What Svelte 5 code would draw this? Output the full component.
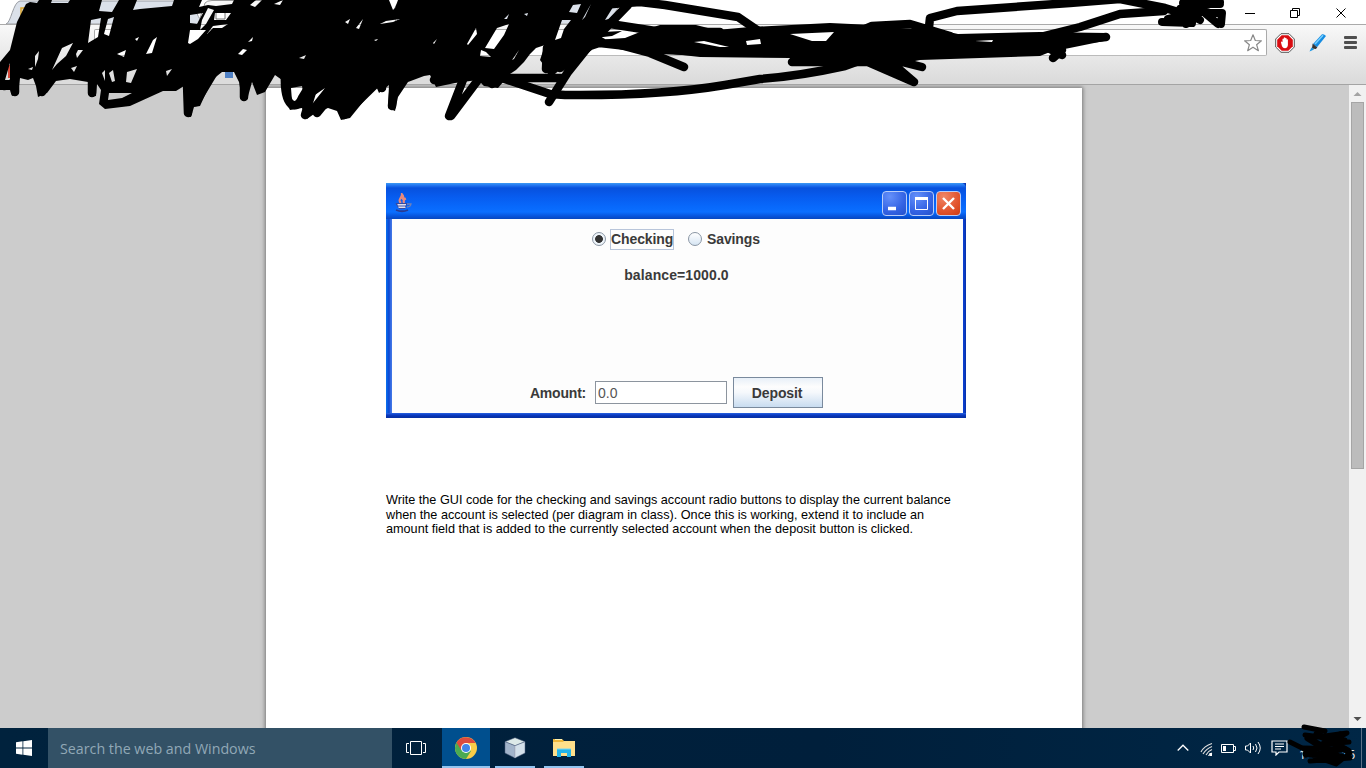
<script>
  let account = $state("checking");
  let balances = $state({ checking: "1000.0", savings: "500.0" });
  let amount = $state("0.0");

  function deposit() {
    const total = Number(balances[account]) + Number(amount);
    balances[account] = total.toFixed(1);
  }

  // marker strokes, each is a freehand line over the toolbar
  const strokes = [
    "M4 86L12 85L20 66M15 60L15 92M42 78L42 92M92 82L92 93",
    "M187 84L188 113M244 84L244 97M188 72L196 102L214 72",
    "M285 74Q284 98 291 104Q298 108 302 98L318 72M305 115L312 92L330 70M317 113L352 70M332 98L345 76",
    "M344 115L390 70M382 78L382 88M392 106L394 84L411 60M392 80L418 67",
    "M434 80L455 76M449 116L466 72M451 116L484 72M484 75L492 84",
    "M490 74L550 94L565 95Q660 96 725 85L760 79Q800 76 845 66L870 57",
    "M549 102L568 72L592 42L628 5M547 48L546 69M500 78L564 78M553 70L586 42",
    "M600 5L640 2L665 5L738 17L760 32M610 24L662 32L720 32M620 45L650 53L684 67",
    "M560 68L590 46L602 42M600 43L662 50L720 52",
    "M792 62L870 62L912 55M860 58L890 70L912 80M868 62L914 82L886 58L922 67",
    "M842 39L872 26L910 24L950 36M929 27L930 18L957 11L1070 3L1120 -1L1165 8L1188 15",
    "M1020 46L1106 37M1020 42L1080 27L1120 14L1164 11M1050 49L1062 55M1053 58L1062 50"
  ];

  const heavy = [
    "M1183 3L1220 4M1190 8L1220 2M1188 15L1206 11M1162 22L1192 23M1168 19L1190 14M1206 13L1222 13L1221 24M1180 9L1200 20M1206 14L1218 24M1183 10L1186 24"
  ];
</script>

<div class="screen">
  <header class="browser">
    <div class="tabstrip">
      <svg class="tabs" width="640" height="24" viewBox="0 0 640 24">
        <path d="M6 24C11 23 13 2 20 1H188C195 2 198 23 205 24Z" fill="#dbe1ea" stroke="#9a9da3" />
        <path d="M198 24L205 3Q207 .5 212 .5H383Q389 1 397 24" fill="#f7f7f7" stroke="#999" />
        <path d="M394 10C397 2 400 1 405 1H608Q615 2 622 0L609 24H399Z" fill="#dbe1ea" stroke="#aaa" />
        <rect x="21" y="8" width="7" height="10" fill="#ded4b1" stroke="#dda52b" stroke-width="1.5" />
        <path d="M216 12h9v7h-9z" fill="#fff" stroke="#777" />
        <circle cx="407" cy="8" r="3" fill="#e68b27" />
      </svg>
      <svg class="caption" width="138" height="24" viewBox="0 0 138 24" fill="none" stroke="#000">
        <path d="M17 13.5h10" />
        <path d="M62.500 10.500h7v7h-7zM64.500 10V8.500h7v7h-2" />
        <path d="M108.500 8.500l9 9M117.500 8.500l-9 9" />
      </svg>
    </div>

    <div class="toolbar">
      <div class="address">
        <svg width="20" height="20" viewBox="0 0 20 20">
          <path d="M10 1.800l2.300 5.700 6.100.3-4.800 3.900 1.800 6-5.400-3.500-5.300 3.500 1.700-6-4.800-3.900 6.100-.3z" fill="#fff" stroke="#888" stroke-width="1.200" stroke-linejoin="round" />
        </svg>
      </div>
      <svg class="ext" width="20" height="20" viewBox="0 0 20 20">
        <path d="M6 .7h8L19.300 6v8L14 19.300H6L.7 14V6z" fill="#fff" stroke="#555" />
        <path d="M6.700 2.200h6.600l4.500 4.500v6.600l-4.500 4.500H6.700l-4.500-4.500V6.700z" fill="#d90d12" />
        <path d="M6 9.500q0-1 .8-1l.7.8V6q.7-1 1.300 0v2-3.200q.7-1 1.400 0V8 5.200q.7-.9 1.400 0V9 6.600q.8-.7 1.300 0V12q-.2 3-3 3.200-2 0-2.900-2z" fill="#fff" />
      </svg>
      <svg class="ext pen" width="18" height="20" viewBox="0 0 18 20">
        <path d="M4 11L13 1.300q2-.7 4 1.600L8 14.200z" fill="#168ce1" />
        <path d="M6 11l8-8.700" stroke="#78d0ff" stroke-width="1.500" />
        <path d="M3.600 10.600l4.700 4-1.500 1.500-3.800-.6z" fill="#333" />
        <path d="M2.500 14.500l2.500 2-4.500 2z" fill="#1595e5" />
      </svg>
      <div class="menu"><i></i><i></i><i></i></div>
    </div>

    <div class="bookmarks">
      <i class="red"></i><i class="green"></i><i class="blue"></i>
    </div>
  </header>

  <main class="viewer">
    <article class="page">
      <section class="window">
        <div class="titlebar">
          <svg width="18" height="20" viewBox="0 0 18 20" fill="none">
            <path d="M7 10C3 7 8 5 8 1.500q2.500 3 0 5 2.500-2 3-.5-2 1-1 4" stroke="#e98a7c" stroke-width="2.200" />
            <path d="M2 10.500h11l-2 5H5z" fill="#8f9bd0" stroke="#3149a3" />
            <path d="M13 11h4q-.5 3-4 3" stroke="#6f80b8" stroke-width="1.300" />
            <path d="M4 11.500h8M4.500 14.500h7" stroke="#dde0ee" />
            <path d="M2 17q6 2.500 12 0" stroke="#2a3b92" stroke-width="1.800" />
          </svg>
          <div class="controls">
            <button aria-label="Minimize"><svg width="23" height="23"><path d="M5 16.500h8" stroke="#fff" stroke-width="3.500" /></svg></button>
            <button aria-label="Maximize"><svg width="23" height="23"><path d="M5.500 6.500h12v11h-12z" fill="none" stroke="#fff" /><path d="M5 6.500h13" stroke="#fff" stroke-width="3" /></svg></button>
            <button class="close" aria-label="Close"><svg width="23" height="23"><path d="M6 6l11 11M17 6L6 17" stroke="#fff" stroke-width="2.400" /></svg></button>
          </div>
        </div>

        <div class="pane">
          <div class="accounts">
            <label>
              <input type="radio" value="checking" bind:group={account} />
              <span class="boxed">Checking</span>
            </label>
            <label>
              <input type="radio" value="savings" bind:group={account} />
              <span>Savings</span>
            </label>
          </div>
          <div class="balance">balance={balances[account]}</div>
          <div class="entry">
            <label for="amount">Amount:</label>
            <input id="amount" bind:value={amount} />
            <button onclick={deposit}>Deposit</button>
          </div>
        </div>
      </section>

      <p>
        Write the GUI code for the checking and savings account radio buttons to display the current balance<br />
        when the account is selected (per diagram in class). Once this is working, extend it to include an<br />
        amount field that is added to the currently selected account when the deposit button is clicked.
      </p>
    </article>

    <div class="scrollbar">
      <svg width="17" height="17"><path d="M4.500 11h8l-4-4z" fill="#a3a3a3" /></svg>
      <div class="thumb"></div>
      <svg width="17" height="17"><path d="M4.500 6h8l-4 4z" fill="#505050" /></svg>
    </div>
  </main>

  <footer class="taskbar">
    <div class="start">
      <svg width="16" height="16" viewBox="0 0 16 16" fill="#fff"><path d="M0 2.200l6.500-.9v6.200H0zM7.300 1.200L16 0v7.500H7.300zM0 8.400h6.500v6.300L0 13.800zM7.300 8.400H16V16l-8.700-1.200z" /></svg>
    </div>
    <div class="search">Search the web and Windows</div>
    <div class="task view">
      <svg width="20" height="16" viewBox="0 0 20 16" fill="none" stroke="#fff"><path d="M4.500 1.500h11v13h-11zM3 3.500H.5v9H3M17 3.500h2.500v9H17" /></svg>
    </div>
    <div class="task active">
      <svg width="22" height="22" viewBox="0 0 22 22">
        <circle cx="11" cy="11" r="11" fill="#f8cd48" />
        <path d="M11 11L1.500 5.500A11 11 0 0 0 11 22l5-8z" fill="#4baa52" />
        <path d="M1.500 5.500A11 11 0 0 1 20.600 6H11L6 13z" fill="#dc4b3e" />
        <circle cx="11" cy="11" r="5" fill="#fff" />
        <circle cx="11" cy="11" r="4" fill="#4285e8" />
      </svg>
    </div>
    <div class="task open">
      <svg width="22" height="22" viewBox="0 0 22 22" stroke="#506080" stroke-width=".5">
        <path d="M11 .7l10 4-10 4-10-4z" fill="#dce9e8" />
        <path d="M1 4.700l10 4V21L1 16z" fill="#a2b4ca" />
        <path d="M21 4.700l-10 4V21l10-5z" fill="#d3e0ea" />
        <path d="M11 8.700V21" stroke="#fff" />
      </svg>
    </div>
    <div class="task open folder">
      <svg width="22" height="20" viewBox="0 0 22 20">
        <path d="M0 1h9l2 2h10v4H0z" fill="#efb83c" />
        <path d="M2 1.500h7" stroke="#fff3b3" />
        <path d="M0 4h10l1-1h11v15H0z" fill="#ffe08b" />
        <path d="M4 19v-8h14v8h-4v-4H8v4z" fill="#23b4e9" />
        <path d="M4 11h14" stroke="#79d7f5" />
      </svg>
    </div>

    <div class="tray">
      <svg width="12" height="12" viewBox="0 0 12 12" fill="none" stroke="#fff" stroke-width="1.300"><path d="M.7 8.500L6 3.200l5.300 5.300" /></svg>
      <svg class="wifi" width="14" height="14" viewBox="0 0 14 14" fill="none" stroke="#ddd" stroke-width="1.200"><path d="M1 10Q4 4 12 1.500M3 12Q6 7 12 4.500M6 13q2-4 6-5.500M8.500 14q1-2 3.500-3" /><path d="M9.500 11H12v3H9.500z" fill="#fff" stroke="none" /></svg>
      <svg width="15" height="12" viewBox="0 0 15 12" fill="none" stroke="#fff"><path d="M.5 2.500h12v8H.5zM13 4.500h1.500v4H13" /><path d="M2 4h3v5H2z" fill="#fff" stroke="none" /></svg>
      <svg width="17" height="14" viewBox="0 0 17 14" fill="none" stroke="#fff"><path d="M.5 5h2l3-3v10l-3-3h-2zM8 5q1.500 2 0 4M10.500 3q3 4 0 8M13 1q4.500 6 0 12" /></svg>
      <svg width="17" height="16" viewBox="0 0 17 16" fill="none" stroke="#fff" stroke-width="1.200"><path d="M1 1h15v11H8l-3 3v-3H1zM4 4h9M4 6.500h9M4 9h6" /></svg>
      <span class="clock">1<span>16</span></span>
      <i class="peek"></i>
    </div>
  </footer>

  <svg class="marker" width="1366" height="768" viewBox="0 0 1366 768" fill="none" stroke="#000" stroke-linecap="round" stroke-linejoin="round">
    <!-- scribbled out block, even-odd leaves the slivers between strokes open -->
    <path
      stroke="none"
      fill="#000"
      fill-rule="evenodd"
      d="M26 4L30 2L37 3L39 0H52L51 3L68 3L70 0H102L99 11L112 12L119 0H137L133 10L140 9L172 6L174 0H202L199 7L208 5L216 6L232 4L234 0H638L628 9L612 20L598 37L585 46L575 52L563 63L554 74L548 75L546 68L540 60L545 45L536 48L530 54L524 62L516 70L510 74L498 88L484 86L478 80L455 83L436 87L430 75L424 76L408 82L398 97L395 111L388 108L389 85L379 93L376 86L350 118L341 120L337 111L328 108L314 114L307 119L302 108L290 110L284 98L282 80L275 75L265 92L257 95L252 82L247 100L242 99L239 82L234 72L222 72L212 80L200 106L194 107L191 117L185 116L184 86L176 91L163 91L130 106L105 109L99 104L101 90L97 84L96 96L90 97L88 82L70 79L56 81L47 93L38 97L36 86L33 78L28 80L20 78L18 94L12 96L10 90L0 90L0 62L10 50L17 22Z
      M5 80L10 63L10 80ZM91 20L101 18L98 37L88 43ZM108 19L114 17L109 36L104 34ZM62 48L73 43L66 56L57 64L52 70ZM35 56L39 51L38 59L35 67ZM78 50L83 50L77 58L76 54Z
      M117 54L126 50L124 57ZM153 40L157 37L152 53L146 54ZM135 39L139 37L137 41ZM188 43L190 30L206 30L198 39L190 44ZM207 34L213 26L228 24L222 28L213 28ZM215 13L231 13L226 20L214 20ZM202 20L208 8L214 10L206 24L200 30ZM190 15L203 13L197 24L190 23ZM250 5L256 0H262L255 7ZM274 4L283 0L280 5Z
      M238 54L243 49L247 50L242 55ZM248 42L253 37L252 41ZM299 58L306 55L304 59ZM102 73L105 70L105 81ZM109 73L113 70L115 81L112 82ZM127 72L137 69L131 83L126 82ZM71 68L77 66L74 72ZM28 69L33 67L32 70ZM166 71L172 69L167 76ZM108 100L109 93L132 93L122 98ZM192 83L195 85L193 93Z
      M291 88L302 86L303 92L299 103L292 101ZM309 108L312 97L325 88ZM329 97L336 86L332 102ZM345 22L350 19L348 24ZM356 28L363 19L359 29ZM380 24L386 21L400 19L393 22ZM374 40L378 39L376 41ZM433 43L437 39L434 44Z
      M467 44L476 28L477 34L468 45ZM485 48L497 28L509 24L504 35L494 49ZM481 50L486 52L491 57L480 56ZM512 60L519 50L514 59ZM504 19L509 14L507 19ZM524 14L528 13L527 16ZM555 40L562 20L571 20L564 29L561 38ZM569 12L573 5L581 4L577 13ZM582 20L591 4L585 17ZM605 20L615 4L621 8L612 18ZM594 37L603 32L622 31L612 36L594 38ZM393 10L389 0H398L395 8Z"
    />
    {#each strokes as d}
      <path {d} stroke-width="8.500" />
    {/each}
    <!-- crossed out web address -->
    <path
      stroke="none"
      fill="#000"
      fill-rule="evenodd"
      d="M595 40L625 38L650 28L660 25L696 25L716 30L750 27L830 23L872 25L880 27L940 30L958 34L1040 32L1106 33L1104 41L1050 52L1040 56L920 60L910 62L792 66L790 58L700 57L655 52L620 48Z
      M694 42L704 41L729 47L720 47ZM746 41L760 39L761 44L747 45ZM790 34L834 32L826 41L812 41ZM975 41L993 40L992 42Z"
    />
    {#each heavy as d}
      <path {d} stroke-width="8" />
    {/each}
    <path d="M1304 727L1325 731M1290 742L1308 751M1305 735L1345 740M1310 738L1347 733L1326 744L1349 742M1303 748L1346 749L1310 755L1342 756M1310 761L1350 758M1311 755L1336 764L1350 753" stroke-width="5" />
    <path d="M1308 738L1340 758M1317 734L1348 751M1306 754L1340 735" stroke-width="7" />
  </svg>
</div>

<style>
  :global(body) {
    margin: 0;
    overflow: hidden;
  }

  .screen {
    position: relative;
    width: 1366px;
    height: 768px;
    display: flex;
    flex-direction: column;
    font-family: "Liberation Sans", Arial, sans-serif;
    background: #ccc;
  }

  svg {
    display: block;
    flex: none;
  }

  .browser {
    height: 85px;
    box-sizing: border-box;
    border-bottom: 1px solid #a4a4a4;
    background: linear-gradient(#f8f8f8 25px, #dcdcdc 80px);
    flex: none;
  }

  .tabstrip {
    display: flex;
    justify-content: space-between;
    height: 24px;
    background: #fff;
    border-bottom: 1px solid #aaa;
  }

  .toolbar {
    display: flex;
    align-items: center;
    height: 33px;
    padding: 1px 9px 0 94px;
  }

  .address {
    width: 1173px;
    height: 27px;
    box-sizing: border-box;
    border: 1px solid #aaa;
    border-bottom-color: #bbb;
    border-radius: 2px;
    background: #fff;
    display: flex;
    align-items: center;
    justify-content: flex-end;
    padding-right: 3px;
  }

  .ext {
    margin-left: 8px;
  }

  .pen {
    margin-left: 14px;
  }

  .menu {
    margin: -1px 0 0 17px;
    display: grid;
    gap: 2px;
  }

  .menu i {
    width: 13px;
    height: 3px;
    border-radius: 1px;
    background: #4f4f4f;
  }

  .bookmarks {
    display: flex;
    padding: 6px 8px;
  }

  .bookmarks i {
    width: 2px;
    height: 13px;
  }

  .red {
    background: #d84a3a;
  }

  .green {
    background: #24a15d;
  }

  .bookmarks .blue {
    width: 8px;
    margin-left: 213px;
    background: #4f80c4;
  }

  .viewer {
    height: 643px;
    display: flex;
    justify-content: space-between;
    overflow: hidden;
  }

  .page {
    width: 696px;
    height: 640px;
    margin: 3px 0 0 266px;
    padding: 95px 0 0 120px;
    box-sizing: content-box;
    background: #fff;
    box-shadow: 0 0 4px 1px #777;
  }

  .window {
    width: 580px;
    height: 235px;
    box-sizing: border-box;
    display: flex;
    flex-direction: column;
    padding: 0 3px 4px 6px;
    background:
      linear-gradient(#2a63e0, #0a3bc4 2px, #0730a5) bottom / 100% 4px no-repeat,
      linear-gradient(90deg, #0a72f0 0, #0c45d1 3px, #3f74e5 5px, #0b42cf 570px, #0b3fcf 578px, #0830a4 580px);
    border-bottom: 1px solid #0730a5;
  }

  .titlebar {
    display: flex;
    align-items: center;
    justify-content: space-between;
    height: 36px;
    margin: 0 -3px 0 -6px;
    padding: 4px 5px 0 8px;
    box-sizing: border-box;
    border-radius: 0 5px 0 0;
    background: linear-gradient(#3c9af2 0, #267af3 2px, #0751dd 5px, #075bee 13px, #0869fc 24px, #0b6fff 29px, #0755dd 33px, #0747bf 36px);
  }

  .controls {
    display: flex;
    gap: 2px;
  }

  .controls button {
    width: 25px;
    height: 25px;
    padding: 0;
    border: 1px solid #b8cdf8;
    border-radius: 4px;
    background: radial-gradient(circle at 30% 20%, #6490fa, #3463e4 60%, #2351cb);
  }

  .controls .close {
    background: radial-gradient(circle at 30% 20%, #f08665, #e2542e 60%, #ce3b13);
  }

  .pane {
    flex: 1;
    display: flex;
    flex-direction: column;
    align-items: center;
    padding-right: 2px;
    background: #fdfdfd;
    color: #3a3a3a;
    font-size: 14px;
    font-weight: bold;
  }

  .accounts {
    display: flex;
    gap: 14px;
    margin-top: 10px;
  }

  .accounts label {
    display: flex;
    align-items: center;
    gap: 3px;
    height: 21px;
  }

  .accounts input {
    appearance: none;
    width: 14px;
    height: 14px;
    box-sizing: border-box;
    margin: 0 1px 1px 0;
    border: 1px solid #8a96a4;
    border-radius: 50%;
    background: linear-gradient(#fff, #d6e5f3);
  }

  .accounts input:checked {
    background: radial-gradient(circle, #333 0 3.500px, #eef4f9 4.300px);
  }

  .accounts span {
    line-height: 19px;
    letter-spacing: -0.130px;
    border: 1px solid transparent;
  }

  .accounts .boxed {
    border-color: #b8c5da;
  }

  .balance {
    margin-top: 17px;
    line-height: 16px;
    letter-spacing: 0.1px;
  }

  .entry {
    display: flex;
    align-items: center;
    margin-top: 94px;
  }

  .entry label {
    letter-spacing: -0.2px;
  }

  .entry input {
    width: 132px;
    height: 23px;
    box-sizing: border-box;
    margin: 0 6px 0 9px;
    padding: 0 2px;
    border: 1px solid #8c949e;
    background: #fff;
    color: #555;
    font: 14px "Liberation Sans", Arial, sans-serif;
  }

  .entry button {
    width: 90px;
    height: 31px;
    padding: 0 2px 0 0;
    border: 1px solid #7a8a9d;
    background: linear-gradient(#e8f0f8, #fdfdfd 30%, #f5f8fc 50%, #c8dcf0);
    color: #3a3a3a;
    font: bold 14px "Liberation Sans", Arial, sans-serif;
    letter-spacing: -0.1px;
  }

  p {
    margin: 75px 0 0;
    font-size: 12.670px;
    line-height: 14.500px;
    white-space: nowrap;
    color: #000;
  }

  .scrollbar {
    width: 17px;
    display: flex;
    flex-direction: column;
    background: #f1f1f1;
  }

  .thumb {
    width: 13px;
    height: 367px;
    box-sizing: border-box;
    margin: 0 2px auto;
    border: 1px solid #a5a5a5;
    background: #bcbcbc;
  }

  .taskbar {
    height: 40px;
    display: flex;
    background: linear-gradient(90deg, #00223d, #001f3b 60%, #002746);
  }

  .start,
  .task {
    display: flex;
    align-items: center;
    justify-content: center;
    width: 48px;
    box-sizing: border-box;
  }

  .search {
    width: 344px;
    box-sizing: border-box;
    padding: 0 0 0 12px;
    background: #335166;
    color: #91a8b6;
    font: 14.250px/41px "Open Sans", "Noto Sans", sans-serif;
  }

  .view {
    width: 50px;
    padding-right: 2px;
  }

  .active {
    background: #004f8e;
    border-bottom: 2px solid #92c4ef;
  }

  .open {
    width: 40px;
    margin-left: 5px;
    border-bottom: 2px solid #92c4ef;
  }

  .folder {
    margin-left: 9px;
  }

  .open svg,
  .active svg {
    margin-top: 1px;
  }

  .tray {
    display: flex;
    align-items: center;
    margin-left: auto;
    height: 40px;
    gap: 9px;
  }

  .wifi {
    margin: 2px -2px 0 2px;
  }

  .clock {
    display: flex;
    justify-content: space-between;
    width: 56px;
    margin: 0 1px 0 2px;
    padding-top: 13px;
    color: #fff;
    font: 12px "Open Sans", sans-serif;
  }

  .peek {
    width: 4px;
    height: 40px;
    margin-left: -4px;
    border-left: 1px solid #5c7187;
  }

  .marker {
    position: absolute;
    inset: 0;
    pointer-events: none;
  }
</style>
